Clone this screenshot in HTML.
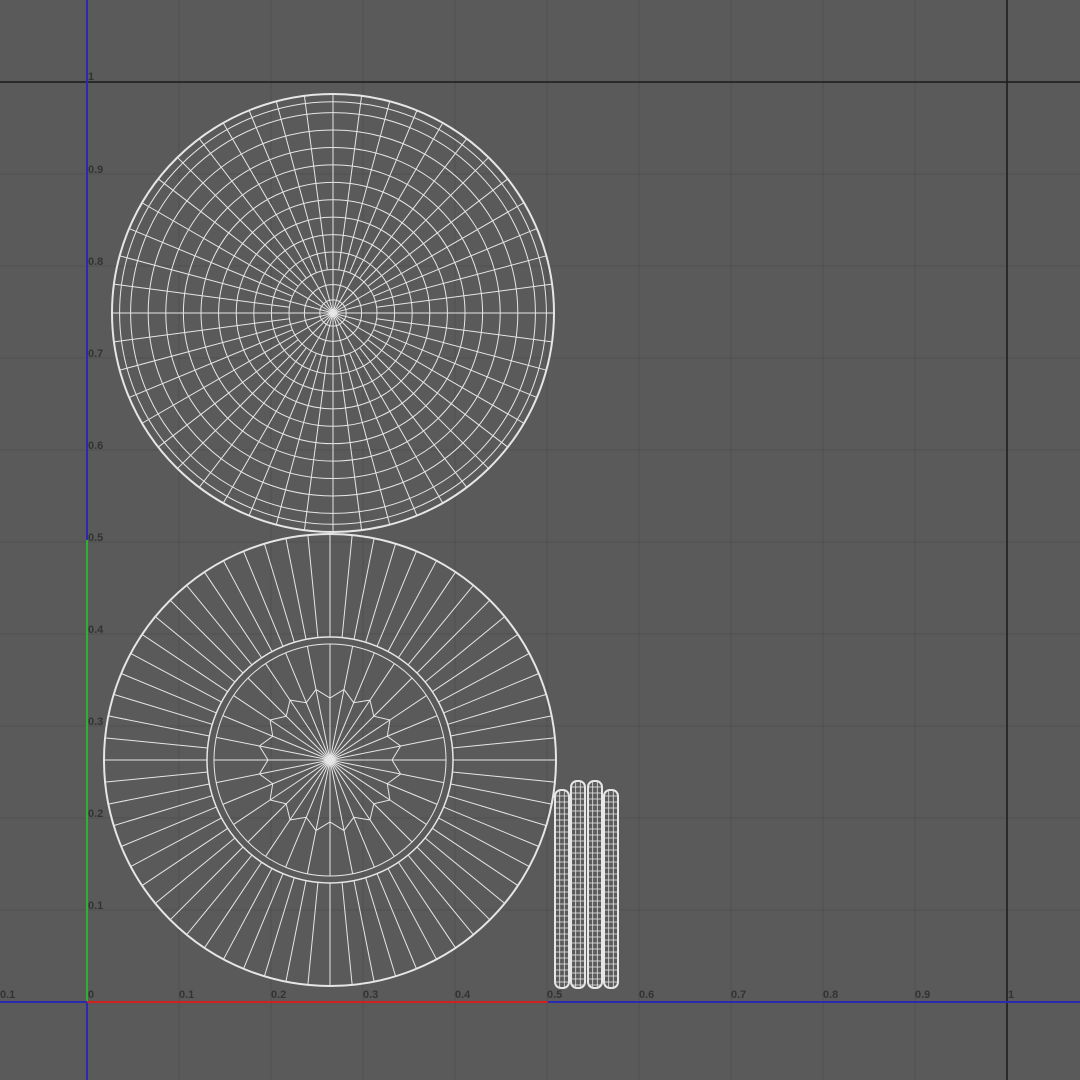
<!DOCTYPE html>
<html><head><style>html,body{margin:0;padding:0;background:#5a5a5a;width:1080px;height:1080px;overflow:hidden}svg{display:block}text{font-family:"Liberation Sans",sans-serif;font-size:11px;font-weight:bold;fill:#333}</style></head>
<body>
<svg id="s" width="1080" height="1080" xmlns="http://www.w3.org/2000/svg">
<rect width="1080" height="1080" fill="#5a5a5a"/>
<g id="grid" stroke="#505050" stroke-width="1"></g>
<g id="uv" fill="none" stroke="#e6e6e6" stroke-width="1"></g>
<line x1="0" y1="82" x2="1080" y2="82" stroke="#1a1a1a" stroke-width="1.5"/>
<line x1="1007" y1="0" x2="1007" y2="1080" stroke="#1a1a1a" stroke-width="1.5"/>
<line x1="87" y1="0" x2="87" y2="1080" stroke="#2a2ab0" stroke-width="2"/>
<line x1="87" y1="540" x2="87" y2="1002" stroke="#30b030" stroke-width="2"/>
<line x1="0" y1="1002" x2="1080" y2="1002" stroke="#2a2ab0" stroke-width="2"/>
<line x1="87" y1="1002" x2="548" y2="1002" stroke="#d02020" stroke-width="2"/>
<text x="0" y="998">0.1</text><text x="88" y="998">0</text>
<text x="179" y="998">0.1</text><text x="271" y="998">0.2</text><text x="363" y="998">0.3</text><text x="455" y="998">0.4</text><text x="547" y="998">0.5</text><text x="639" y="998">0.6</text><text x="731" y="998">0.7</text><text x="823" y="998">0.8</text><text x="915" y="998">0.9</text><text x="1008" y="998">1</text>
<text x="88" y="909">0.1</text><text x="88" y="817">0.2</text><text x="88" y="725">0.3</text><text x="88" y="633">0.4</text><text x="88" y="541">0.5</text><text x="88" y="449">0.6</text><text x="88" y="357">0.7</text><text x="88" y="265">0.8</text><text x="88" y="173">0.9</text><text x="88" y="80">1</text>
</svg>
<script>
var NS="http://www.w3.org/2000/svg";
function el(p,t,a){var e=document.createElementNS(NS,t);for(var k in a)e.setAttribute(k,a[k]);p.appendChild(e);return e;}
var g=document.getElementById('grid'),u=document.getElementById('uv');
for(var i=-1;i<13;i++){var x=87+92*i;el(g,'line',{x1:x,y1:0,x2:x,y2:1080});var y=1002-92*i;el(g,'line',{x1:0,y1:y,x2:1080,y2:y});}
var cx=333,cy=313,R=220;
el(u,'ellipse',{cx:cx,cy:cy,rx:R+1,ry:R-1,'stroke-width':2});
var rings=[0.06,0.13,0.2,0.28,0.36,0.44,0.52,0.6,0.68,0.76,0.84,0.92,0.97];
rings.forEach(function(f){el(u,'ellipse',{cx:cx,cy:cy,rx:R*f,ry:R*f*0.99});});
for(var k=0;k<48;k++){var a=k*Math.PI*2/48;var r0=(k%2)?R*0.2:0;el(u,'line',{x1:cx+r0*Math.cos(a),y1:cy+r0*Math.sin(a),x2:cx+R*Math.cos(a),y2:cy+R*Math.sin(a)});}
cx=330;cy=760;R=226;
el(u,'circle',{cx:cx,cy:cy,r:R,'stroke-width':2});
el(u,'circle',{cx:cx,cy:cy,r:123,'stroke-width':1.5});
el(u,'circle',{cx:cx,cy:cy,r:116});
for(k=0;k<64;k++){a=k*Math.PI*2/64;el(u,'line',{x1:cx+123*Math.cos(a),y1:cy+123*Math.sin(a),x2:cx+R*Math.cos(a),y2:cy+R*Math.sin(a)});}
var pts=[];
for(k=0;k<32;k++){a=k*Math.PI*2/32;var r=(k%2)?72:62;pts.push((cx+r*Math.cos(a)).toFixed(1)+','+(cy+r*Math.sin(a)).toFixed(1));
 el(u,'line',{x1:cx,y1:cy,x2:cx+r*Math.cos(a),y2:cy+r*Math.sin(a)});
 el(u,'line',{x1:cx+r*Math.cos(a),y1:cy+r*Math.sin(a),x2:cx+116*Math.cos(a),y2:cy+116*Math.sin(a)});}
el(u,'polygon',{points:pts.join(' ')});
[[562,790],[578,781],[595,781],[611,790]].forEach(function(c){
 var x=c[0]-7,w=14,t=c[1],b=988;
 el(u,'rect',{x:x,y:t,width:w,height:b-t,rx:6,'stroke-width':2});
 for(var yy=t+6;yy<b;yy+=6)el(u,'line',{x1:x,y1:yy,x2:x+w,y2:yy,'stroke-width':0.8});
 el(u,'line',{x1:x+4.7,y1:t,x2:x+4.7,y2:b,'stroke-width':0.8});
 el(u,'line',{x1:x+9.3,y1:t,x2:x+9.3,y2:b,'stroke-width':0.8});
});
</script>
</body></html>
